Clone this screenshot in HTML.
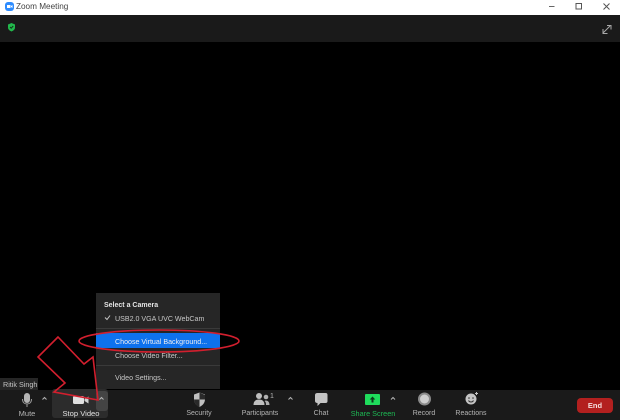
<!DOCTYPE html>
<html>
<head>
<meta charset="utf-8">
<style>
html,body{margin:0;padding:0;background:#000}
#p{position:relative;width:620px;height:420px;overflow:hidden;background:#000;font-family:"Liberation Sans",sans-serif;filter:blur(.35px)}
#p div{position:absolute}
.t{white-space:nowrap;line-height:10px}
.l{font-size:7px;color:#b4b4b4;text-align:center;top:409px;font-weight:400;transform:translateX(-50%)}
.m{font-size:7.1px;color:#c8c8c8;left:115px}
svg{position:absolute;left:0;top:0}
</style>
</head>
<body>
<div id="p">
<div style="left:0;top:0;width:620px;height:15px;background:#fff"></div>
<div class="t" style="left:16px;top:2px;font-size:8.2px;color:#444">Zoom Meeting</div>
<div style="left:0;top:15px;width:620px;height:27px;background:#1a1a1a"></div>
<div style="left:0;top:390px;width:620px;height:30px;background:#1a1a1a"></div>
<div style="left:52px;top:389px;width:56px;height:29px;background:#2c2c2c;border-radius:3px"></div>
<div style="left:96px;top:391px;width:12px;height:20px;background:#444;border-radius:3px"></div>
<div style="left:0;top:378px;width:38px;height:12px;background:#262626"></div>
<div class="t" style="left:3px;top:380px;font-size:7.2px;color:#c4c4c4">Ritik Singh</div>

<div style="left:96px;top:293px;width:124px;height:96px;background:#262626"></div>
<div class="t m" style="left:104px;top:301px;color:#e4e4e4;font-weight:bold;font-size:7px">Select a Camera</div>
<div class="t m" style="top:314px">USB2.0 VGA UVC WebCam</div>
<div style="left:96px;top:328px;width:124px;height:1px;background:#3a3a3a"></div>
<div style="left:96px;top:333px;width:124px;height:15px;background:#0e72ed"></div>
<div class="t m" style="top:337px;color:#f0f0f0">Choose Virtual Background...</div>
<div class="t m" style="top:351px">Choose Video Filter...</div>
<div style="left:96px;top:365px;width:124px;height:1px;background:#3a3a3a"></div>
<div class="t m" style="top:373px">Video Settings...</div>

<div class="t l" style="left:27px;font-size:7.5px">Mute</div>
<div class="t l" style="left:81px;color:#e0e0e0;font-size:7.6px">Stop Video</div>
<div class="t l" style="left:199px">Security</div>
<div class="t l" style="left:260px">Participants</div>
<div class="t l" style="left:321px">Chat</div>
<div class="t l" style="left:373px;color:#1db954;font-size:7.3px">Share Screen</div>
<div class="t l" style="left:424px">Record</div>
<div class="t l" style="left:471px">Reactions</div>
<div class="t" style="left:577px;top:398px;width:36px;height:15px;background:#b3201f;border-radius:4px;color:#f4dede;font-size:7.5px;font-weight:bold;text-align:center;line-height:15px">End</div>
<div class="t" style="left:270px;top:392px;font-size:7px;color:#b4b4b4">1</div>

<svg width="620" height="420" viewBox="0 0 620 420">
  <rect x="5" y="2" width="9" height="9" rx="3" fill="#2d8cff"/>
  <path d="M7 5h3.500v3H7zM11 6l1.500-1v3L11 7z" fill="#fff"/>
  <path d="M549 6.500h5.500" stroke="#666" fill="none"/>
  <rect x="576" y="3.500" width="5.500" height="5.500" stroke="#555" fill="none"/>
  <path d="M603.500 3.500l6 6M609.500 3.500l-6 6" stroke="#555" fill="none"/>
  <path d="M8 24.500l3.500-1.500 3.500 1.500v3c0 2-1.500 3-3.500 4-2-1-3.500-2-3.500-4z" fill="#22b84c"/>
  <path d="M10 27l1.200 1.200 2-2.200" stroke="#0d3318" fill="none"/>
  <path d="M603 33l7-7M607 25.500h4v4M603 29v4.500h4.500" stroke="#a8a8a8" fill="none"/>
  <rect x="24" y="393" width="6" height="10" rx="3" fill="#b4b4b4"/>
  <path d="M22.500 399c0 3.500 2 5 4.500 5s4.500-1.500 4.500-5M27 404v3" stroke="#9a9a9a" fill="none"/>
  <path d="M42.500 399.500l2-2 2 2M99.500 399.500l2-2 2 2M288.500 399.500l2-2 2 2M391 399.500l2-2 2 2" stroke="#b4b4b4" fill="none"/>
  <rect x="73" y="396" width="11" height="8" rx="1.500" fill="#e0e0e0"/>
  <path d="M84.500 399l4-2.500v7l-4-2.500z" fill="#d0d0d0"/>
  <path d="M199.500 392.500l5.500 2v4.500c0 4-2.500 6.500-5.500 8-3-1.500-5.500-4-5.500-8v-4.500z" fill="#c0c0c0"/>
  <path d="M199.500 392.500v7h5.500v-4.500zM199.500 399.500h-5.500c.2 3.500 2.500 6.500 5.500 8z" fill="#2a2a2a"/>
  <circle cx="259" cy="396" r="3" fill="#c0c0c0"/>
  <path d="M253.500 405c0-4 2.500-5.500 5.500-5.500s5.500 1.500 5.500 5.500z" fill="#c0c0c0"/>
  <circle cx="266" cy="397" r="2.300" fill="#b0b0b0"/>
  <path d="M265.500 400.500c2.500 0 4 1.500 4 4.500h-3.500c0-2-.2-3-1.500-4z" fill="#b0b0b0"/>
  <path d="M317.500 393h8c1.500 0 2 .8 2 2v6c0 1.200-.5 2-2 2h-5l-3 3v-3c-1.500 0-2.500-.8-2.500-2v-6c0-1.200 1-2 2.500-2z" fill="#c4c4c4"/>
  <rect x="365" y="394" width="15" height="11" rx="1" fill="#1fdc5c"/>
  <path d="M372.500 396.500l-2.800 3h1.800v3h2v-3h1.800z" fill="#0b3d1c"/>
  <circle cx="424.500" cy="399" r="6.500" fill="#8a8a8a"/>
  <circle cx="424.500" cy="399" r="4.500" fill="#cfcfcf"/>
  <circle cx="471" cy="399" r="5.500" fill="#c4c4c4"/>
  <circle cx="469" cy="398" r=".8" fill="#333"/>
  <circle cx="473" cy="398" r=".8" fill="#333"/>
  <path d="M468.500 400.500c1 2 4 2 5 0" stroke="#333" fill="none"/>
  <path d="M475 393.500h3M476.500 392v3" stroke="#c4c4c4" fill="none"/>
  <path d="M105 317.500l2 2 3-4" stroke="#c8c8c8" fill="none"/>
  <ellipse cx="159" cy="341" rx="80" ry="11" fill="none" stroke="#d21f2e" stroke-width="1.600"/>
  <polygon points="58,337 38,357 65,383 54,392 98,400 93,357 84,364" fill="none" stroke="#d21f2e" stroke-width="1.600"/>
</svg>
</div>
</body>
</html>
